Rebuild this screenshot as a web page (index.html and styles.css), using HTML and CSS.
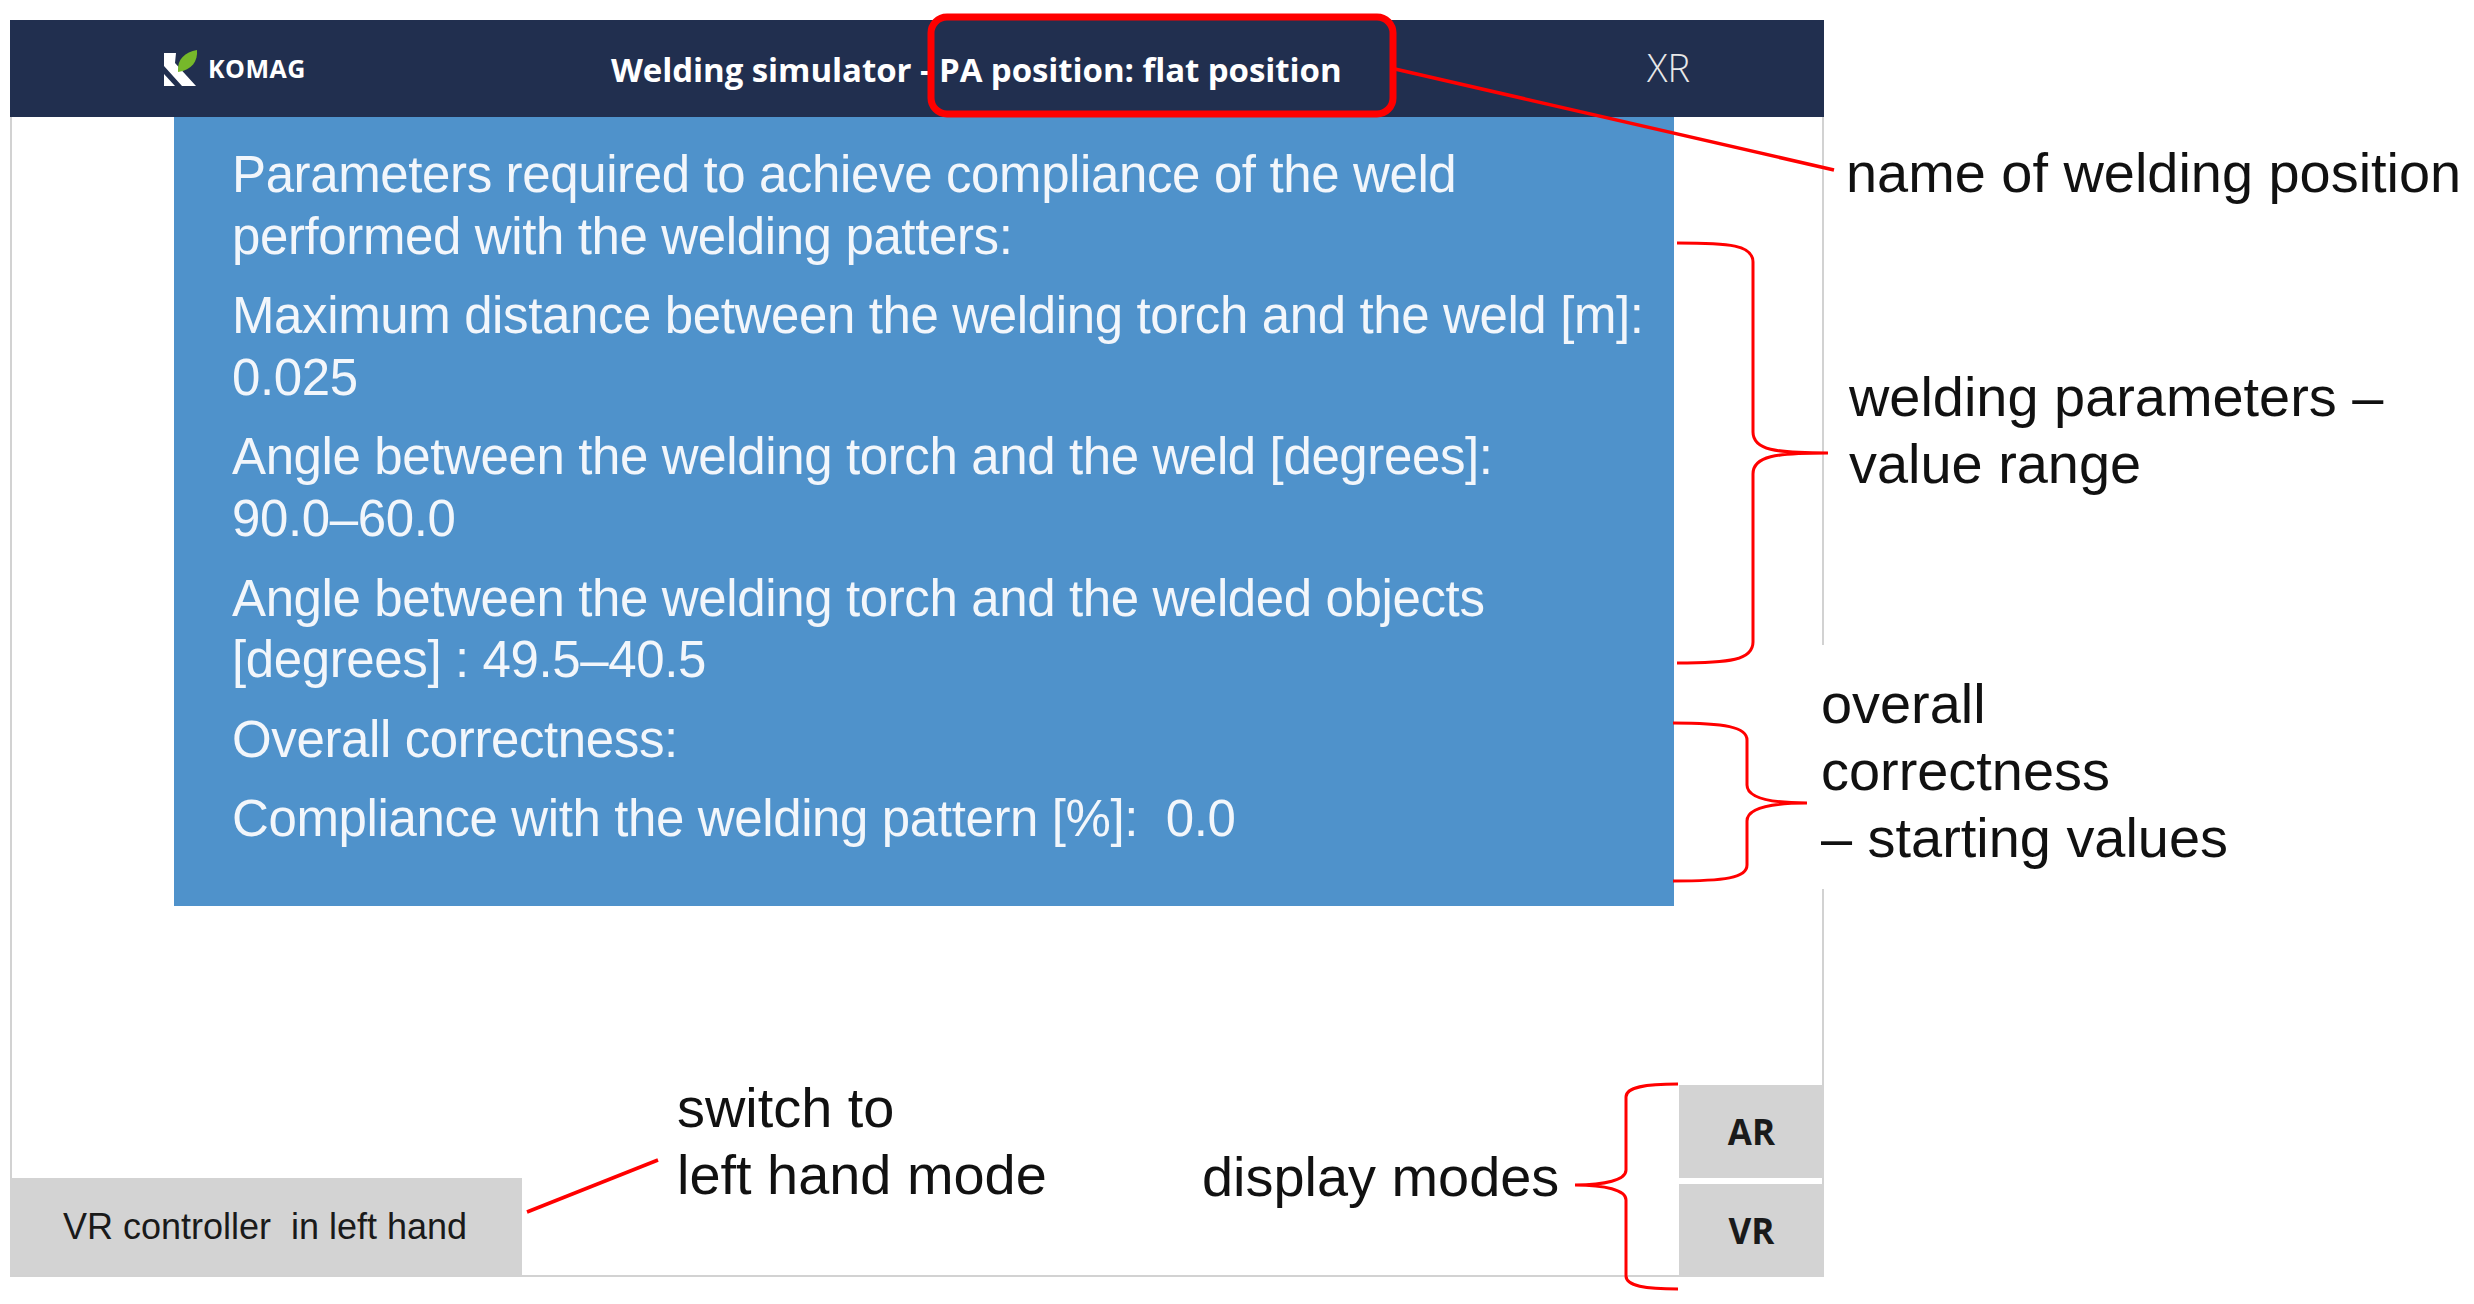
FILE: index.html
```html
<!DOCTYPE html>
<html lang="en">
<head>
    <meta charset="UTF-8">
    <meta name="viewport" content="width=device-width, initial-scale=1.0">
    <title>Welding simulator - PA position</title>
    <link rel="stylesheet" href="styles.css">
</head>
<body>
    <div class="figure">
        <!-- simulator screen -->
        <div class="screen">
            <header class="topbar">
                <div class="logo-container">
                    <svg class="logo-img" viewBox="0 0 36 38">
                        <polygon points="1,4 13,4 12,14 33,37 19,37 1,17" fill="#fff"/>
                        <polygon points="1,25 12,37 1,37" fill="#fff"/>
                        <path d="M15,23 C14,10 22,3 34,1 C35,12 29,21 15,23 Z" fill="#76b82a"/>
                    </svg>
                    <div class="logo">KOMAG</div>
                </div>
                <div class="title">Welding simulator - PA position: flat position</div>
                <div class="xr">XR</div>
            </header>

            <main class="params">
                <p>Parameters required to achieve compliance of the weld<br>performed with the welding patters:</p>
                <p>Maximum distance between the welding torch and the weld [m]:<br>0.025</p>
                <p>Angle between the welding torch and the weld [degrees]:<br>90.0–60.0</p>
                <p>Angle between the welding torch and the welded objects<br>[degrees] : 49.5–40.5</p>
                <p>Overall correctness:</p>
                <p>Compliance with the welding pattern [%]:&nbsp; 0.0</p>
            </main>

            <div class="bottom-row">
                <button class="hand-btn">VR controller&nbsp; in left hand</button>
                <div class="modes">
                    <button class="mode-btn">AR</button>
                    <button class="mode-btn">VR</button>
                </div>
            </div>
        </div>

        <!-- callouts -->
        <div class="note note-name">name of welding position</div>
        <div class="note note-params">welding parameters –<br>value range</div>
        <div class="note note-overall">overall<br>correctness<br>– starting values</div>
        <div class="note note-switch">switch to<br>left hand mode</div>
        <div class="note note-modes">display modes</div>

        <svg class="marks" viewBox="0 0 2474 1304">
            <rect class="mark mark-box" x="931" y="17" width="462" height="97" rx="16"/>
            <path class="mark mark-line" d="M1395,69 L1834,170"/>
            <path class="mark" d="M1677,243 C1730,243 1753,245 1753,262 L1753,432 C1753,450 1775,453 1828,453 C1775,453 1753,456 1753,474 L1753,642 C1753,660 1730,663 1677,663"/>
            <path class="mark" d="M1673,723 C1725,723 1747,727 1747,740 L1747,785 C1747,798 1770,803 1807,803 C1770,803 1747,808 1747,821 L1747,865 C1747,878 1725,881 1673,881"/>
            <path class="mark" d="M1678,1084 C1645,1084 1626,1087 1626,1097 L1626,1170 C1626,1180 1605,1185 1575,1185 C1605,1185 1626,1190 1626,1200 L1626,1276 C1626,1286 1645,1289 1678,1289"/>
            <path class="mark mark-line" d="M527,1212 L658,1160"/>
        </svg>
    </div>
</body>
</html>
```

FILE: styles.css
```css
body {
    margin: 0;
    background: #fff;
    font-family: "Liberation Sans", Arial, sans-serif;
    color: #111;
}
.figure {
    position: relative;
    width: 2474px;
    height: 1304px;
    overflow: hidden;
    padding: 20px 0 0 10px;
    box-sizing: border-box;
}
.screen {
    width: 1814px;
    height: 1257px;
    box-sizing: border-box;
    border: 2px solid #d2d2d2;
    display: flex;
    flex-direction: column;
}

/* top bar */
.topbar {
    height: 97px;
    margin: -2px -2px 0 -2px;
    flex: none;
    background: #212f4f;
    color: #fff;
    display: flex;
    align-items: center;
}
.logo-container {
    display: flex;
    align-items: center;
    gap: 9px;
    width: 601px;
    padding: 0 0 2px 153px;
    box-sizing: border-box;
    flex: none;
}
.logo-img {
    width: 36px;
    height: 38px;
}
.logo {
    font-family: "Open Sans", sans-serif;
    font-size: 25px;
    font-weight: 700;
    letter-spacing: 0.5px;
}
.title {
    font-family: "Open Sans", sans-serif;
    font-size: 33px;
    font-weight: 700;
    letter-spacing: -0.07px;
    white-space: nowrap;
    width: 1036px;
    flex: none;
    padding-top: 2px;
}
.xr {
    font-family: "Open Sans", sans-serif;
    font-size: 38px;
    font-weight: 300;
    color: #e8e8e8;
    padding-bottom: 4px;
}

/* blue panel */
.params {
    margin-left: 162px;
    width: 1500px;
    height: 789px;
    flex: none;
    box-sizing: border-box;
    padding: 27px 20px 0 58px;
    background: #4f92cb;
    color: #f2f6fb;
    font-size: 51px;
    line-height: 61.5px;
    letter-spacing: -0.38px;
}
.params p {
    margin: 0 0 18.2px;
}

/* bottom buttons */
.bottom-row {
    flex: 1;
    display: flex;
    justify-content: space-between;
    align-items: flex-end;
}
.hand-btn {
    width: 512px;
    height: 97px;
    margin-left: -2px;
    border: none;
    background: #d3d3d3;
    color: #1a1a1a;
    font-family: "Liberation Sans", Arial, sans-serif;
    font-size: 36px;
    padding: 0 2px 0 0;
}
.modes {
    display: flex;
    flex-direction: column;
    gap: 6px;
    margin: 0 -2px -2px 0;
}
.mode-btn {
    width: 145px;
    height: 93px;
    border: none;
    background: #d3d3d3;
    color: #1a1a1a;
    font-family: "Open Sans", sans-serif;
    font-size: 35px;
    font-weight: 700;
    padding: 0;
}

/* callouts */
.note {
    position: absolute;
    font-size: 55.9px;
    line-height: 67px;
    white-space: nowrap;
    background: #fff;
}
.note-name { left: 1846px; top: 139px; }
.note-params { left: 1849px; top: 363px; }
.note-overall { left: 1821px; top: 645px; padding: 25px 0 0; height: 219px; }
.note-switch { left: 677px; top: 1074px; background: none; }
.note-modes { left: 1202px; top: 1143px; background: none; }

.marks {
    position: absolute;
    left: 0;
    top: 0;
    width: 2474px;
    height: 1304px;
    pointer-events: none;
}
.mark {
    fill: none;
    stroke: #ff0000;
    stroke-width: 3;
}
.mark-box {
    stroke-width: 7;
}
.mark-line {
    stroke-width: 3.5;
}
```
